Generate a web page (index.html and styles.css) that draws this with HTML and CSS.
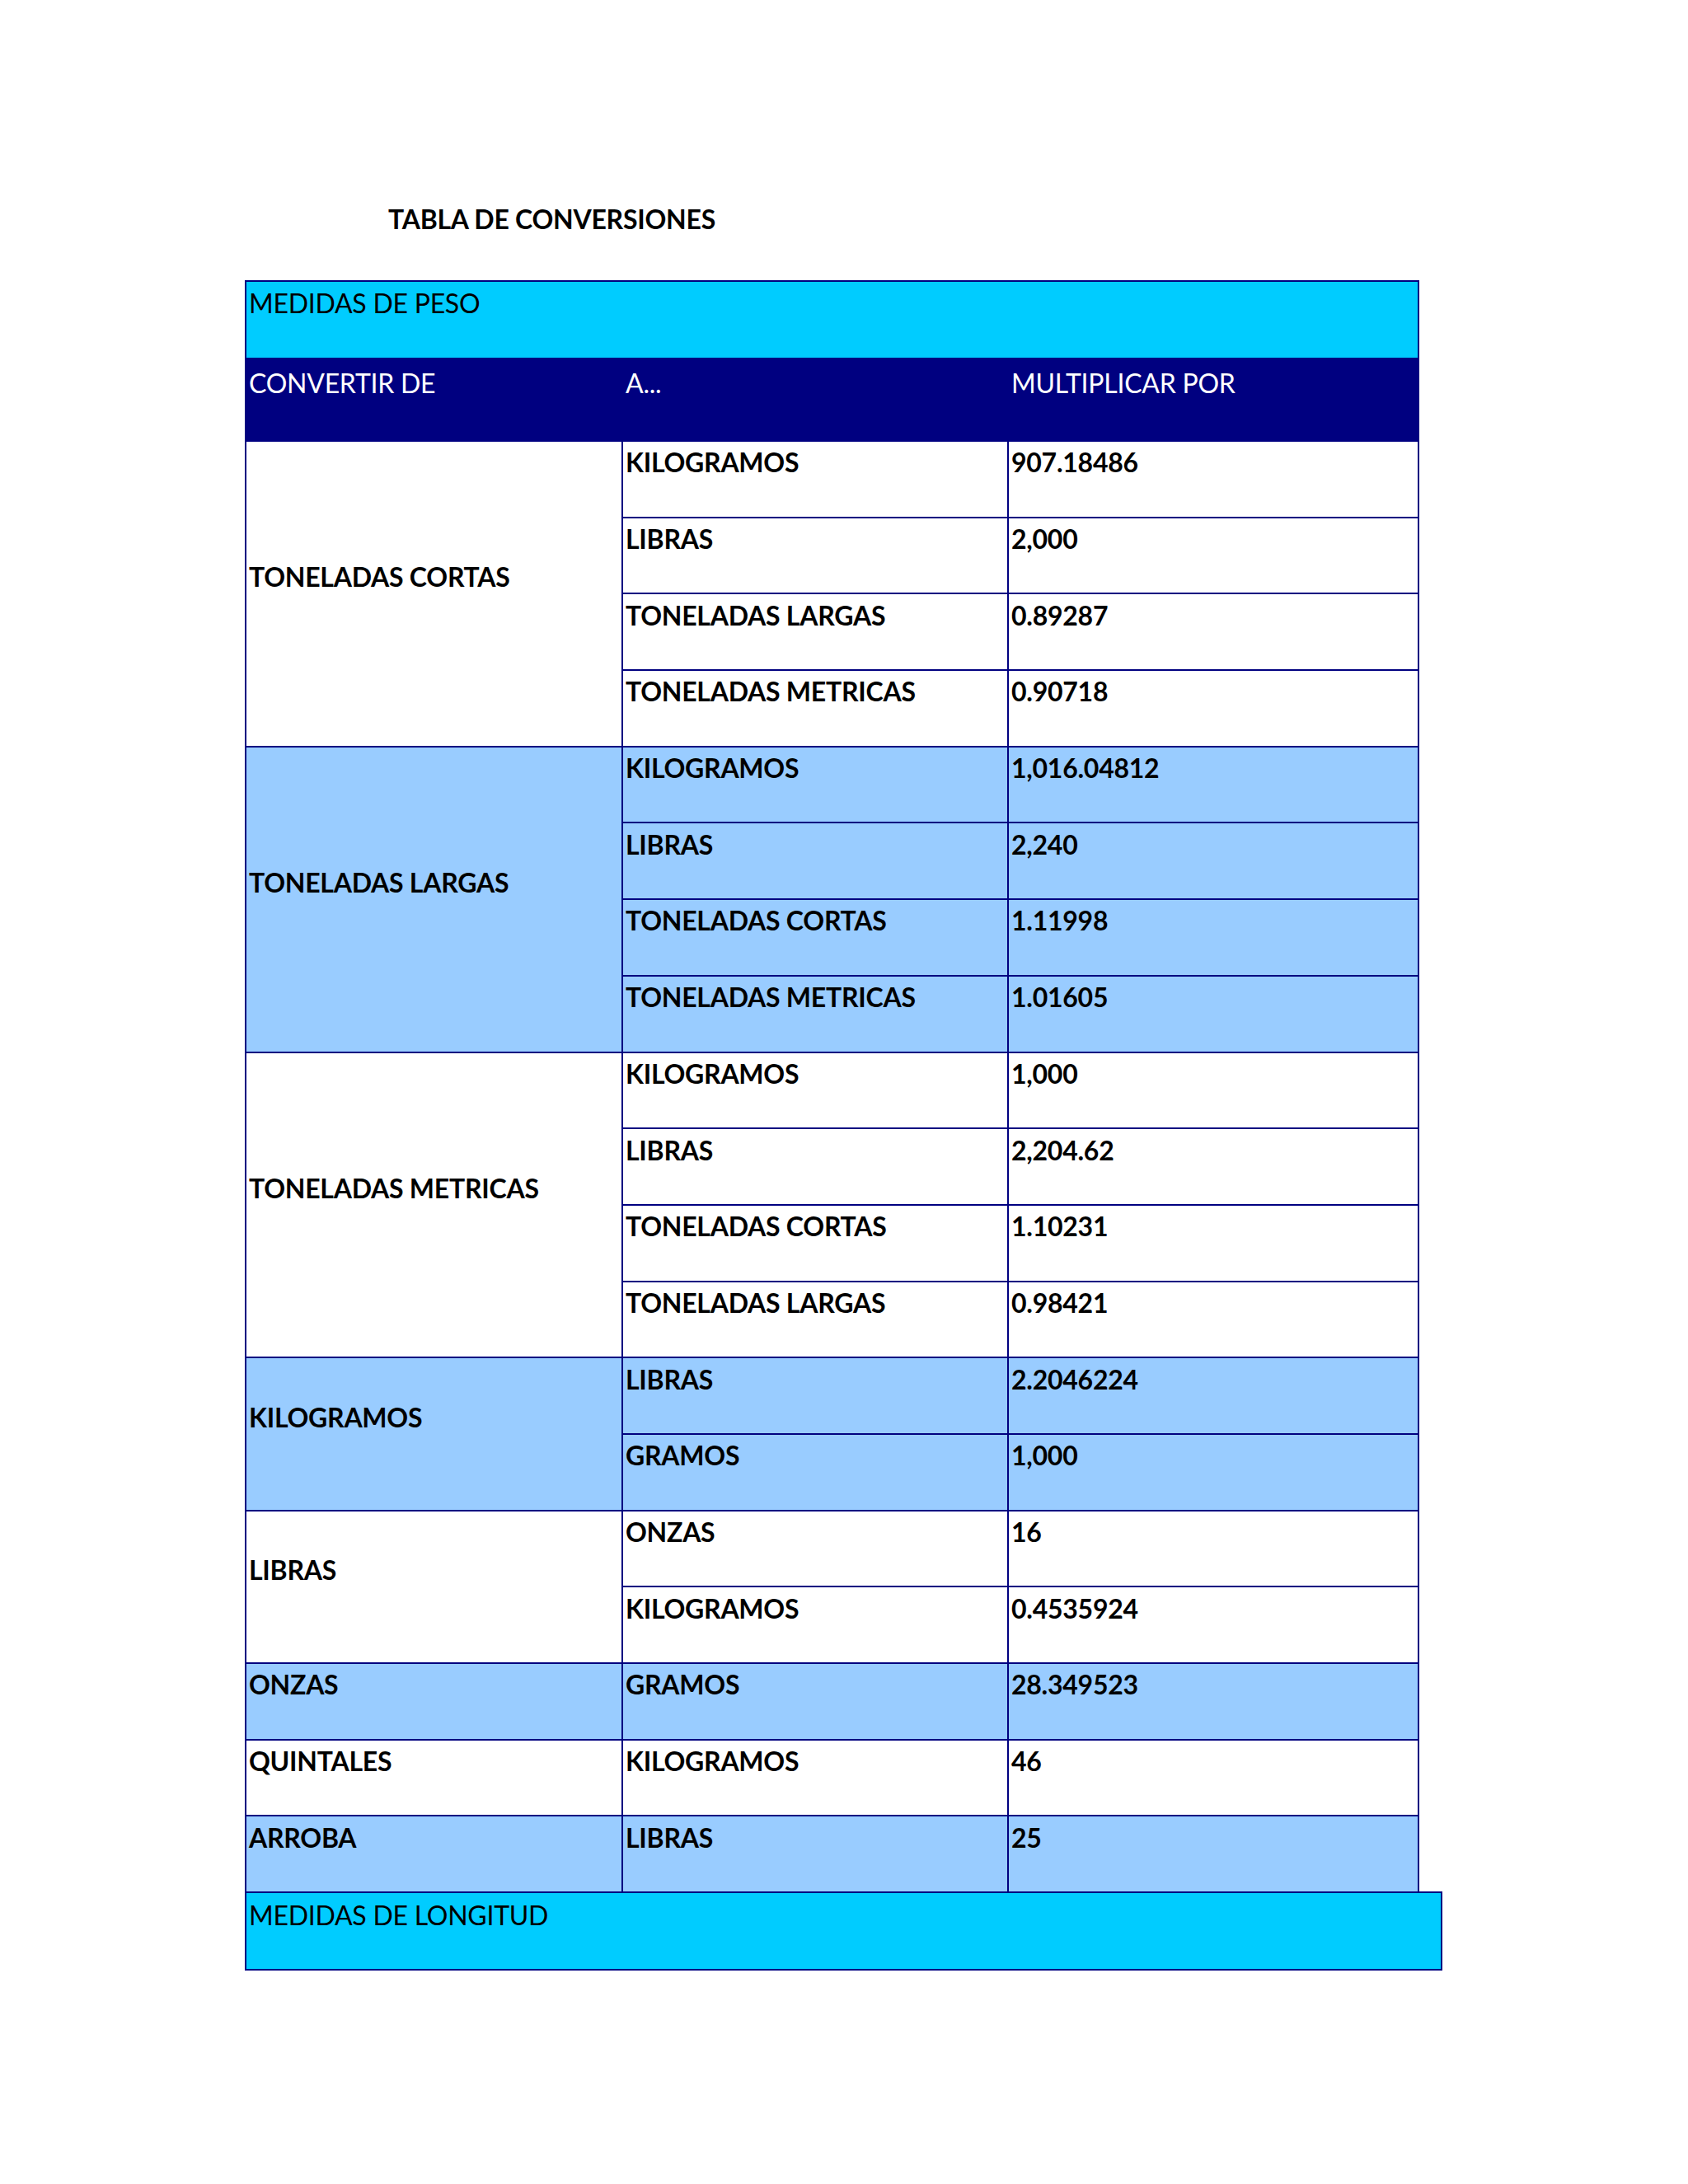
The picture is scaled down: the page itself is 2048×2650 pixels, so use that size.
FILE: index.html
```html
<!DOCTYPE html>
<html lang="es">
<head>
<meta charset="utf-8">
<title>Tabla de conversiones</title>
<link rel="stylesheet" href="styles.css">
</head>
<body>
<div class="page">
  <h1 class="title">TABLA DE CONVERSIONES</h1>
  <table class="conv">
    <colgroup>
      <col class="c1"><col class="c2"><col class="c3">
    </colgroup>
    <tr class="section"><td colspan="3">MEDIDAS DE PESO</td></tr>
    <tr class="head"><td>CONVERTIR DE</td><td>A...</td><td>MULTIPLICAR POR</td></tr>

    <tr class="row w"><td class="from" rowspan="4">TONELADAS CORTAS</td><td>KILOGRAMOS</td><td>907.18486</td></tr>
    <tr class="row w"><td>LIBRAS</td><td>2,000</td></tr>
    <tr class="row w"><td>TONELADAS LARGAS</td><td>0.89287</td></tr>
    <tr class="row w"><td>TONELADAS METRICAS</td><td>0.90718</td></tr>

    <tr class="row b"><td class="from" rowspan="4">TONELADAS LARGAS</td><td>KILOGRAMOS</td><td>1,016.04812</td></tr>
    <tr class="row b"><td>LIBRAS</td><td>2,240</td></tr>
    <tr class="row b"><td>TONELADAS CORTAS</td><td>1.11998</td></tr>
    <tr class="row b"><td>TONELADAS METRICAS</td><td>1.01605</td></tr>

    <tr class="row w"><td class="from" rowspan="4">TONELADAS METRICAS</td><td>KILOGRAMOS</td><td>1,000</td></tr>
    <tr class="row w"><td>LIBRAS</td><td>2,204.62</td></tr>
    <tr class="row w"><td>TONELADAS CORTAS</td><td>1.10231</td></tr>
    <tr class="row w"><td>TONELADAS LARGAS</td><td>0.98421</td></tr>

    <tr class="row b"><td class="from" rowspan="2">KILOGRAMOS</td><td>LIBRAS</td><td>2.2046224</td></tr>
    <tr class="row b"><td>GRAMOS</td><td>1,000</td></tr>

    <tr class="row w"><td class="from" rowspan="2">LIBRAS</td><td>ONZAS</td><td>16</td></tr>
    <tr class="row w"><td>KILOGRAMOS</td><td>0.4535924</td></tr>

    <tr class="row b"><td class="from">ONZAS</td><td>GRAMOS</td><td>28.349523</td></tr>
    <tr class="row w"><td class="from">QUINTALES</td><td>KILOGRAMOS</td><td>46</td></tr>
    <tr class="row b"><td class="from">ARROBA</td><td>LIBRAS</td><td>25</td></tr>
  </table>
  <div class="section-bar">MEDIDAS DE LONGITUD</div>
</div>
</body>
</html>
```

FILE: styles.css
```css
html, body {
  margin: 0;
  padding: 0;
  background: #ffffff;
}

.page {
  padding: 246px 0 0 297px;
  font-family: "Lato", "Liberation Sans", sans-serif;
  font-size: 32px;
  letter-spacing: -0.25px;
  color: #000000;
}

.title {
  margin: 0 0 54px 174px;
  font-size: 32px;
  font-weight: 700;
  line-height: 40px;
}

.conv {
  border-collapse: collapse;
  table-layout: fixed;
  width: 1423px;
}

.c1 { width: 457px; }
.c2 { width: 468px; }
.c3 { width: 498px; }

.conv td {
  border: 2px solid #000080;
  padding: 0 4px 40px 3px;
  line-height: 40px;
  vertical-align: middle;
  font-weight: 700;
  white-space: nowrap;
}

.conv .section td {
  height: 94px;
  box-sizing: border-box;
  background: #00ccff;
  font-weight: 400;
  vertical-align: top;
  padding: 6px 4px 0 3px;
}

.conv .head td {
  height: 100px;
  box-sizing: border-box;
  background: #000080;
  color: #ffffff;
  font-weight: 400;
  vertical-align: top;
  padding: 9px 4px 0 3px;
}

.conv .row {
  height: 92.7px;
}

.conv .w td { background: #ffffff; }
.conv .b td { background: #99ccff; }

.section-bar {
  box-sizing: border-box;
  width: 1453px;
  height: 96px;
  margin-top: -2px;
  border: 2px solid #000080;
  background: #00ccff;
  padding: 7px 4px 0 3px;
  line-height: 40px;
}
```
